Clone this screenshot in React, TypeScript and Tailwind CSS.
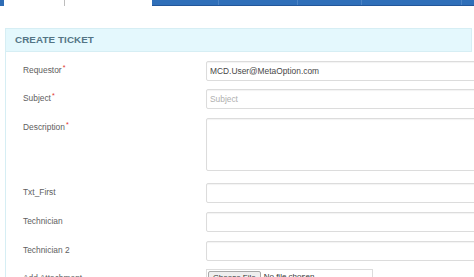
import React from "react";

const font = { fontFamily: '"Liberation Sans", Arial, sans-serif' };

function Label({ text, required }: { text: string; required?: boolean }) {
  return (
    <div className="w-[200px] shrink-0 pl-[17px] pt-[3px] text-[8.4px] leading-[12px] text-[#606060]">
      {text}
      {required ? <sup className="ml-[1px] text-[7px] text-[#e0312b]">*</sup> : null}
    </div>
  );
}

function Row({
  label,
  required,
  children,
  className,
}: {
  label: string;
  required?: boolean;
  children: React.ReactNode;
  className?: string;
}) {
  return (
    <div className={"flex " + (className ?? "")}>
      <Label text={label} required={required} />
      {children}
    </div>
  );
}

function Field({ value, placeholder }: { value?: string; placeholder?: string }) {
  return (
    <div className="flex h-[20px] w-[300px] shrink-0 items-center rounded-[2px] border border-[#dcdcdc] bg-white pl-[3px] text-[8.4px] shadow-[inset_0_1px_1px_rgba(0,0,0,0.05)]">
      {value ? (
        <span className="text-[#474747]">{value}</span>
      ) : placeholder ? (
        <span className="text-[#b0b0b0]">{placeholder}</span>
      ) : null}
    </div>
  );
}

export default function App() {
  return (
    <div className="h-[277px] w-[474px] overflow-hidden bg-white" style={font}>
      {/* top nav strip */}
      <div className="flex h-[6px]">
        <div className="w-[4px] bg-[#2f6db5]" />
        <div className="w-[61px] border-r border-[#bdbdbd] bg-white" />
        <div className="w-[87px] bg-white" />
        <div className="flex flex-1 border-b border-[#22569a] bg-[#2f6fb9]">
          <div className="w-[67px] border-r border-[#4b83c4]" />
          <div className="w-[79px] border-r border-[#4b83c4]" />
          <div className="w-[64px] border-r border-[#4b83c4]" />
          <div className="w-[100px] border-r border-[#4b83c4]" />
          <div className="flex-1" />
        </div>
      </div>

      {/* panel */}
      <div className="ml-[5px] mt-[22px] w-[467px] border-l border-t border-[#d6eef4]">
        <div className="flex h-[23px] items-center border-b border-r border-[#d6eef4] bg-[#e4f8fd] pl-[9px] text-[9.8px] font-bold tracking-[0.1px] text-[#537585]">
          CREATE TICKET
        </div>
        <div className="pt-[9px]">
          <Row label="Requestor" required>
            <Field value="MCD.User@MetaOption.com" />
          </Row>
          <Row label="Subject" required className="mt-[8px]">
            <Field placeholder="Subject" />
          </Row>
          <Row label="Description" required className="mt-[9px]">
            <div className="h-[53px] w-[300px] shrink-0 rounded-[2px] border border-[#dcdcdc] bg-white shadow-[inset_0_1px_1px_rgba(0,0,0,0.05)]" />
          </Row>
          <Row label="Txt_First" className="mt-[12px]">
            <Field />
          </Row>
          <Row label="Technician" className="mt-[9px]">
            <Field />
          </Row>
          <Row label="Technician 2" className="mt-[9px]">
            <Field />
          </Row>
          <Row label="Add Attachment" className="mt-[8px]">
            <div className="flex h-[20px] w-[167px] shrink-0 items-start border border-[#dcdcdc] bg-white pl-[1px] pt-[1px] text-[8px] text-[#333]">
              <span className="rounded-[2px] border border-[#a9a9a9] bg-[#efefef] px-[4px] leading-[11px]">
                Choose File
              </span>
              <span className="ml-[3px] leading-[12px]">No file chosen</span>
            </div>
          </Row>
        </div>
      </div>
    </div>
  );
}
